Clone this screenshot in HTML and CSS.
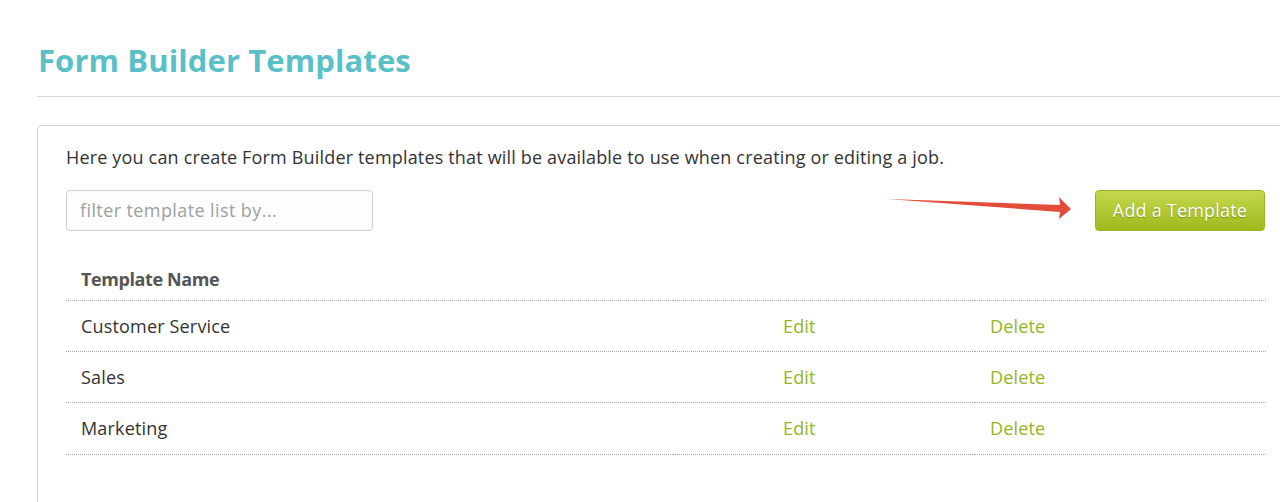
FILE: index.html
```html
<!DOCTYPE html>
<html>
<head>
<meta charset="utf-8">
<link rel="stylesheet" href="styles.css">
</head>
<body>
<div class="page">
  <h1 class="title">Form Builder Templates</h1>
  <div class="rule"></div>
  <div class="panel">
    <p class="intro">Here you can create Form Builder templates that will be available to use when creating or editing a job.</p>
    <div class="toolbar">
      <input class="filter" type="text" placeholder="filter template list by...">
      <button class="add-btn">Add a Template</button>
      <svg class="arrow" width="200" height="30" viewBox="0 0 200 30">
        <polygon points="0,2 173,8 172,0 184,12 172,22 173,15" fill="#e34c39"/>
      </svg>
    </div>
    <table class="templates">
      <colgroup>
        <col class="c-name"><col class="c-gap"><col class="c-edit"><col class="c-del">
      </colgroup>
      <thead>
        <tr><th>Template Name</th><th></th><th></th><th></th></tr>
      </thead>
      <tbody>
        <tr><td>Customer Service</td><td></td><td><a href="#">Edit</a></td><td><a href="#">Delete</a></td></tr>
        <tr><td>Sales</td><td></td><td><a href="#">Edit</a></td><td><a href="#">Delete</a></td></tr>
        <tr><td>Marketing</td><td></td><td><a href="#">Edit</a></td><td><a href="#">Delete</a></td></tr>
      </tbody>
    </table>
  </div>
</div>
</body>
</html>
```
FILE: styles.css
```css
html, body {
  margin: 0;
  padding: 0;
  background: #fff;
  overflow: hidden;
}
body {
  font-family: "Open Sans", Lato, Arial, sans-serif;
  color: #333;
  height: 502px;
}
.page {
  margin-left: 37px;
  width: 1257px;
  padding-top: 40px;
}
.title {
  margin: 0 0 0 1px;
  font-size: 31px;
  font-weight: 700;
  color: #5bbfc7;
  line-height: 40px;
  height: 40px;
  letter-spacing: 0.1px;
}
.rule {
  margin-top: 16px;
  height: 1px;
  background: #d6d6d6;
  width: 1300px;
}
.panel {
  box-sizing: border-box;
  margin-top: 28px;
  border: 1px solid #d4d4d4;
  border-bottom: 0;
  border-radius: 5px 5px 0 0;
  padding: 19px 28px 0 28px;
  height: 377px;
  letter-spacing: 0.17px;
}
.intro {
  margin: 0;
  font-size: 18px;
  line-height: 25px;
}
.toolbar {
  position: relative;
  display: flex;
  justify-content: space-between;
  align-items: center;
  margin-top: 20px;
  height: 40px;
}
.filter {
  box-sizing: border-box;
  width: 307px;
  height: 41px;
  border: 1px solid #cfcfcf;
  border-radius: 4px;
  background: #fdfdfd;
  padding: 0 13px;
  font-family: inherit;
  font-size: 18px;
  letter-spacing: 0.4px;
  color: #333;
  outline: none;
}
.filter::placeholder {
  color: #a0a0a0;
}
.add-btn {
  box-sizing: border-box;
  width: 170px;
  height: 41px;
  border: 1px solid #9cb31e;
  border-radius: 4px;
  background: linear-gradient(#c5d84d, #9fba1d);
  color: #fff;
  font-family: inherit;
  font-size: 18px;
  letter-spacing: 0.2px;
  text-shadow: 0 1px 1px rgba(60, 80, 0, 0.45);
  padding: 0;
}
.arrow {
  position: absolute;
  left: 821px;
  top: 7px;
}
.templates {
  margin-top: 28px;
  width: 1200px;
  border-collapse: collapse;
  table-layout: fixed;
}
.c-name { width: 607px; }
.c-gap { width: 95px; }
.c-edit { width: 207px; }
.c-del { width: 291px; }
.templates th, .templates td {
  text-align: left;
  padding: 0 15px;
  font-size: 18px;
  border-bottom: 1px dotted #a8a8a8;
}
.templates th {
  height: 42px;
  font-weight: 700;
  color: #555;
  letter-spacing: -0.4px;
}
.templates td {
  height: 50.2px;
  color: #333;
}
.templates a {
  color: #93b51f;
  text-decoration: none;
}
```
